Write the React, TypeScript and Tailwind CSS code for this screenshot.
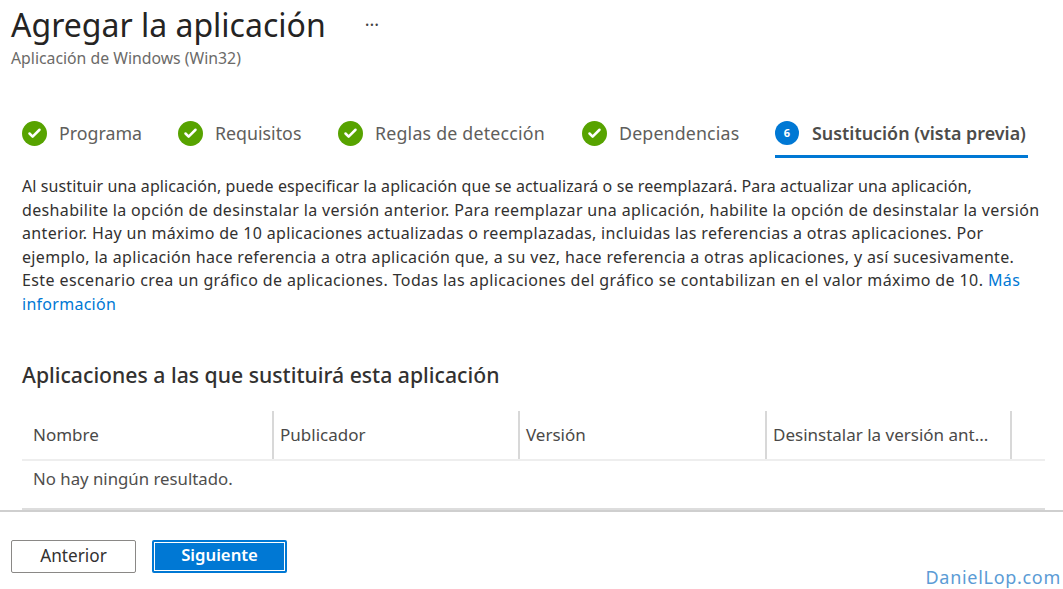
import { Check } from 'lucide-react'

const font = { fontFamily: '"Noto Sans", sans-serif' }

const steps = [
  { label: 'Programa', width: 'w-[156px]', track: '' },
  { label: 'Requisitos', width: 'w-[160px]', track: '' },
  { label: 'Reglas de detección', width: 'w-[244px]', track: 'tracking-[0.2px]' },
  { label: 'Dependencias', width: 'w-[193px]', track: 'tracking-[0.15px]' },
]

const columns = [
  { label: 'Nombre', width: 'w-[252px]', pad: 'pl-[11px]' },
  { label: 'Publicador', width: 'w-[246px]', pad: 'pl-[6px]' },
  { label: 'Versión', width: 'w-[247px]', pad: 'pl-[6px]' },
  { label: 'Desinstalar la versión ant...', width: 'w-[245px]', pad: 'pl-[6px]' },
]

const lines = [
  { text: 'Al sustituir una aplicación, puede especificar la aplicación que se actualizará o se reemplazará. Para actualizar una aplicación,', track: 'tracking-[0.1px]' },
  { text: 'deshabilite la opción de desinstalar la versión anterior. Para reemplazar una aplicación, habilite la opción de desinstalar la versión', track: 'tracking-[0.35px]' },
  { text: 'anterior. Hay un máximo de 10 aplicaciones actualizadas o reemplazadas, incluidas las referencias a otras aplicaciones. Por', track: 'tracking-[0.34px]' },
  { text: 'ejemplo, la aplicación hace referencia a otra aplicación que, a su vez, hace referencia a otras aplicaciones, y así sucesivamente.', track: 'tracking-[0.35px]' },
]

function StepDone({ label, width, track }: { label: string; width: string; track: string }) {
  return (
    <div className={`flex items-center gap-[12px] ${width}`}>
      <span className="flex h-[25px] w-[25px] shrink-0 items-center justify-center rounded-full bg-[#57a300]">
        <Check className="h-[15px] w-[15px] text-white" strokeWidth={4} />
      </span>
      <span className={`whitespace-nowrap text-[17.8px] text-[#605e5c] ${track}`}>{label}</span>
    </div>
  )
}

export default function App() {
  return (
    <div className="flex h-[589px] w-[1063px] flex-col overflow-hidden bg-white" style={font}>
      <div className="px-[11px] pt-[3px]">
        <div className="flex items-start">
          <h1 className="whitespace-nowrap text-[32px] leading-[44px] text-[#252423]">Agregar la aplicación</h1>
          <span className="ml-[39px] mt-[6px] text-[18px] leading-[30px] text-[#444]">···</span>
        </div>
        <p className="whitespace-nowrap text-[15.8px] leading-[22px] text-[#6b6a68]">Aplicación de Windows (Win32)</p>
      </div>

      <div className="mt-[42px] flex h-[45px] pl-[22px]">
        {steps.map((step) => (
          <StepDone key={step.label} label={step.label} width={step.width} track={step.track} />
        ))}
        <div className="flex h-[47px] w-[253px] items-center gap-[13px] border-b-[3px] border-[#0078d4]">
          <span className="flex h-[24px] w-[24px] shrink-0 items-center justify-center rounded-full bg-[#0078d4] text-[11px] font-bold text-white">
            6
          </span>
          <span className="whitespace-nowrap text-[17.9px] font-semibold text-[#4d4c4a]">Sustitución (vista previa)</span>
        </div>
      </div>

      <div className="mt-[19px] pl-[22px] text-[16px] leading-[23.6px] text-[#323130]">
        {lines.map((line) => (
          <div key={line.text} className={`whitespace-nowrap ${line.track}`}>{line.text}</div>
        ))}
        <div className="whitespace-nowrap tracking-[0.39px]">
          Este escenario crea un gráfico de aplicaciones. Todas las aplicaciones del gráfico se contabilizan en el valor máximo de 10.{' '}
          <span className="text-[#0078d4]">Más</span>
        </div>
        <div className="tracking-[0.27px] text-[#0078d4]">información</div>
      </div>

      <h2 className="mt-[45px] pl-[22px] text-[21.2px] font-medium leading-[26px] text-[#323130]">
        Aplicaciones a las que sustituirá esta aplicación
      </h2>

      <div className="ml-[22px] mt-[23px] w-[1023px]">
        <div className="flex h-[50px] border-b-2 border-[#eeeeee]">
          {columns.map((col) => (
            <div key={col.label} className={`flex items-center border-r-2 border-[#d8d8d8] ${col.width} ${col.pad}`}>
              <span className="whitespace-nowrap text-[17px] text-[#4a4948]">{col.label}</span>
            </div>
          ))}
        </div>
        <div className="h-[49px] border-b-2 border-[#dddddd] pl-[11px] pt-[6px] text-[16.8px] leading-[24px] text-[#4f4e4d]">
          No hay ningún resultado.
        </div>
      </div>

      <div className="flex flex-1 items-start justify-between border-t-2 border-[#cfcfcf]">
        <div className="ml-[11px] mt-[28px] flex gap-[16px]">
          <button className="h-[33px] w-[125px] rounded-[2px] border border-[#8a8886] bg-white text-[17.2px] leading-[24px] text-[#323130]">
            Anterior
          </button>
          <button className="h-[33px] w-[135px] rounded-[2px] border-2 border-[#0078d4] bg-[#0078d4] pb-[2px] text-[16.7px] font-semibold leading-[24px] text-white outline outline-1 -outline-offset-3 outline-white">
            Siguiente
          </button>
        </div>
        <span className="mr-[2px] mt-[54px] whitespace-nowrap text-[18px] leading-[22px] tracking-[0.7px] text-[#5b9bd5]">
          DanielLop.com
        </span>
      </div>
    </div>
  )
}
